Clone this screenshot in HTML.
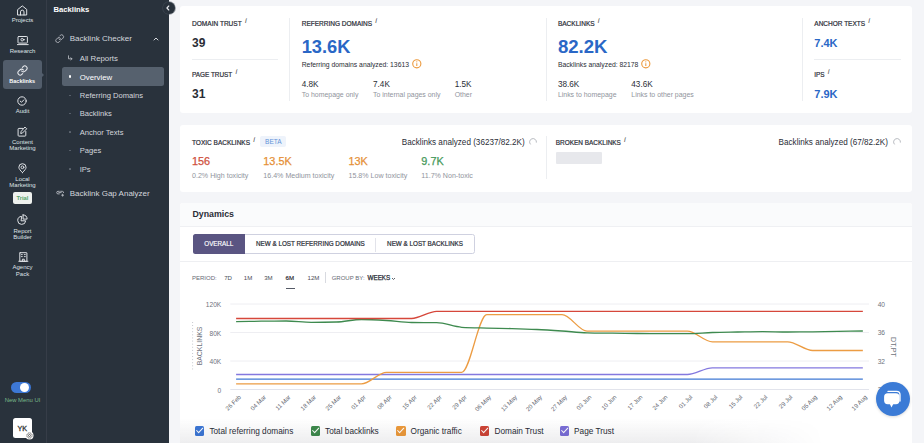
<!DOCTYPE html>
<html><head><meta charset="utf-8"><style>
html,body{margin:0;padding:0;width:924px;height:443px;overflow:hidden;background:#f4f5f8;font-family:"Liberation Sans", sans-serif;}
.t{position:absolute;white-space:nowrap;line-height:1;}
.s{line-height:0;font-style:italic;font-size:7.8px;color:#555;margin-left:3.2px;position:relative;top:-2.6px;-webkit-text-stroke:0;font-weight:400}
</style></head><body>
<div style="position:absolute;left:0px;top:0px;width:169px;height:443px;background:#29323c"></div><div style="position:absolute;left:46px;top:0px;width:1px;height:443px;background:#363d48"></div><div style="position:absolute;left:3px;top:60px;width:38.5px;height:29px;background:#525d6b;border-radius:3px"></div><div style="position:absolute;left:41px;top:71.5px;width:0;height:0;border-top:3px solid transparent;border-bottom:3px solid transparent;border-left:3px solid #525d6b"></div><svg style="position:absolute;left:17px;top:5px" width="11" height="12" viewBox="0 0 11 12" fill="none" stroke="#dfe2e6" stroke-width="1" stroke-linecap="round" stroke-linejoin="round"><path d="M0.9 4.4 L5.3 0.9 L9.7 4.4 V10 H0.9 Z"/><path d="M3.5 10 V6.9 a1.75 1.75 0 0 1 3.5 0 V10"/></svg><div class="t" style="left:22.50px;transform:translateX(-50%);top:17.00px;font-size:6px;color:#dfe1e5;font-weight:400;">Projects</div><svg style="position:absolute;left:16.5px;top:36px" width="12" height="10" viewBox="0 0 12 10" fill="none" stroke="#dfe2e6" stroke-width="1" stroke-linecap="round" stroke-linejoin="round"><rect x="1" y="0.5" width="9.4" height="6.6" rx="0.6"/><path d="M0.4 8.6 H11.2"/><circle cx="5.2" cy="3.7" r="1.3"/><path d="M6.5 3.7 H7.6"/></svg><div class="t" style="left:22.50px;transform:translateX(-50%);top:47.90px;font-size:6px;color:#dfe1e5;font-weight:400;">Research</div><svg style="position:absolute;left:16.5px;top:65.3px" width="11" height="11" viewBox="0 0 24 24" fill="none" stroke="#e6e8ec" stroke-width="2.3" stroke-linecap="round" stroke-linejoin="round"><path d="M10 13a5 5 0 0 0 7.54.54l3-3a5 5 0 0 0-7.07-7.07l-1.72 1.71"/><path d="M14 11a5 5 0 0 0-7.54-.54l-3 3a5 5 0 0 0 7.07 7.07l1.71-1.71"/></svg><div class="t" style="left:22.20px;transform:translateX(-50%);top:78.83px;font-size:5.5px;color:#ffffff;font-weight:700;">Backlinks</div><svg style="position:absolute;left:16.8px;top:96.2px" width="11" height="11" viewBox="0 0 11 11" fill="none" stroke="#dfe2e6" stroke-width="1" stroke-linecap="round" stroke-linejoin="round"><circle cx="5" cy="5" r="4.2"/><path d="M3.2 5.1 L4.5 6.3 L6.9 3.8"/></svg><div class="t" style="left:22.50px;transform:translateX(-50%);top:107.90px;font-size:6px;color:#dfe1e5;font-weight:400;">Audit</div><svg style="position:absolute;left:16.7px;top:125.5px" width="11" height="11" viewBox="0 0 11 11" fill="none" stroke="#dfe2e6" stroke-width="1" stroke-linecap="round" stroke-linejoin="round"><path d="M8.8 5.5 V9.3 a0.8 0.8 0 0 1 -0.8 0.8 H1.9 a0.8 0.8 0 0 1 -0.8 -0.8 V3.2 a0.8 0.8 0 0 1 0.8 -0.8 H5.6"/><path d="M8.2 1.3 L9.7 2.8 L5.4 7.1 L3.7 7.5 L4.1 5.8 Z"/></svg><div class="t" style="left:22.50px;transform:translateX(-50%);top:138.90px;font-size:6px;color:#dfe1e5;font-weight:400;">Content</div><div class="t" style="left:22.50px;transform:translateX(-50%);top:145.10px;font-size:6px;color:#dfe1e5;font-weight:400;">Marketing</div><svg style="position:absolute;left:17.8px;top:163px" width="10" height="12" viewBox="0 0 10 12" fill="none" stroke="#dfe2e6" stroke-width="1" stroke-linecap="round" stroke-linejoin="round"><path d="M4.45 9.6 C2.2 7.3 0.85 5.7 0.85 4.3 a3.6 3.6 0 0 1 7.2 0 C8.05 5.7 6.7 7.3 4.45 9.6 Z"/><circle cx="4.45" cy="4.3" r="1.4"/></svg><div class="t" style="left:22.50px;transform:translateX(-50%);top:175.60px;font-size:6px;color:#dfe1e5;font-weight:400;">Local</div><div class="t" style="left:22.50px;transform:translateX(-50%);top:181.90px;font-size:6px;color:#dfe1e5;font-weight:400;">Marketing</div><div style="position:absolute;left:13px;top:192.3px;width:19px;height:11.7px;background:#eef1ee;border-radius:2px"></div><div class="t" style="left:22.50px;transform:translateX(-50%);top:195.67px;font-size:5.8px;color:#58a56a;font-weight:700;">Trial</div><svg style="position:absolute;left:16.8px;top:214.3px" width="11" height="11" viewBox="0 0 11 11" fill="none" stroke="#dfe2e6" stroke-width="1" stroke-linecap="round" stroke-linejoin="round"><path d="M4.4 2.4 a4 4 0 1 0 4.3 4.4 H4.4 Z"/><path d="M6.1 0.9 V5.1 H10.1 A4.2 4.2 0 0 0 6.1 0.9 Z"/></svg><div class="t" style="left:22.50px;transform:translateX(-50%);top:227.70px;font-size:6px;color:#dfe1e5;font-weight:400;">Report</div><div class="t" style="left:22.50px;transform:translateX(-50%);top:234.20px;font-size:6px;color:#dfe1e5;font-weight:400;">Builder</div><svg style="position:absolute;left:17.5px;top:252.2px" width="11" height="11" viewBox="0 0 11 11" fill="none" stroke="#dfe2e6" stroke-width="1" stroke-linecap="round" stroke-linejoin="round"><rect x="1.8" y="0.7" width="7.1" height="8.6" rx="0.3"/><path d="M0.8 9.3 H9.9"/><path d="M3.3 2.6 H4.3 M6.3 2.6 H7.3 M3.3 4.6 H4.3 M6.3 4.6 H7.3" stroke-width="0.9"/><path d="M4.4 9.3 V7.2 H6.3 V9.3"/></svg><div class="t" style="left:22.50px;transform:translateX(-50%);top:264.20px;font-size:6px;color:#dfe1e5;font-weight:400;">Agency</div><div class="t" style="left:22.50px;transform:translateX(-50%);top:271.20px;font-size:6px;color:#dfe1e5;font-weight:400;">Pack</div><div style="position:absolute;left:10.7px;top:382px;width:20px;height:11.4px;background:#3d78d6;border-radius:6px"></div><div style="position:absolute;left:20.2px;top:383.2px;width:9px;height:9px;background:#fff;border-radius:50%"></div><div class="t" style="left:22.50px;transform:translateX(-50%);top:398.19px;font-size:5.9px;color:#78b88a;font-weight:400;">New Menu UI</div><div style="position:absolute;left:12.8px;top:418.2px;width:19.3px;height:19.8px;background:#fff;border-radius:2.5px"></div><div class="t" style="left:22.30px;transform:translateX(-50%);top:425.48px;font-size:7.2px;color:#333;font-weight:400;-webkit-text-stroke:0.3px #333">YK</div><svg style="position:absolute;left:24.5px;top:431px" width="9" height="9" viewBox="0 0 9 9"><circle cx="4.5" cy="4.5" r="4" fill="#fff"/><circle cx="4.5" cy="4.5" r="2.6" fill="none" stroke="#333" stroke-width="0.9" stroke-dasharray="1.2 0.8"/><circle cx="4.5" cy="4.5" r="1" fill="none" stroke="#333" stroke-width="0.7"/></svg><div class="t" style="left:53.40px;top:5.86px;font-size:7.7px;color:#ffffff;font-weight:700;">Backlinks</div><svg style="position:absolute;left:55.3px;top:33.6px" width="9.4" height="9.4" viewBox="0 0 24 24" fill="none" stroke="#b4b8bf" stroke-width="2.3" stroke-linecap="round" stroke-linejoin="round"><path d="M10 13a5 5 0 0 0 7.54.54l3-3a5 5 0 0 0-7.07-7.07l-1.72 1.71"/><path d="M14 11a5 5 0 0 0-7.54-.54l-3 3a5 5 0 0 0 7.07 7.07l1.71-1.71"/></svg><div class="t" style="left:69.70px;top:34.86px;font-size:8.05px;color:#d4d7dc;font-weight:400;">Backlink Checker</div><svg style="position:absolute;left:152.5px;top:37px" width="6" height="4" viewBox="0 0 6 4" fill="none" stroke="#d4d7dc" stroke-width="1" stroke-linecap="round" stroke-linejoin="round"><path d="M1 3 L3 1 L5 3"/></svg><svg style="position:absolute;left:67px;top:54.6px" width="6" height="6" viewBox="0 0 6 6" fill="none" stroke="#c0c4ca" stroke-width="0.8" stroke-linecap="round"><path d="M1.5 0.8 V3.8 H5"/><path d="M3.8 2.8 L5 3.8 L3.8 4.8"/></svg><div class="t" style="left:79.70px;top:54.97px;font-size:7.8px;color:#d4d7dc;font-weight:400;">All Reports</div><div style="position:absolute;left:62.2px;top:67px;width:102px;height:18.8px;background:#56616e;border-radius:2.5px"></div><div style="position:absolute;left:68.8px;top:75.4px;width:2.4px;height:2.4px;background:#fff;border-radius:50%"></div><div class="t" style="left:79.70px;top:73.57px;font-size:7.8px;color:#ffffff;font-weight:400;">Overview</div><div style="position:absolute;left:69.4px;top:95.0px;width:1.2px;height:1.2px;background:#5d6570;border-radius:50%"></div><div class="t" style="left:79.70px;top:92.14px;font-size:7.6px;color:#d4d7dc;font-weight:400;">Referring Domains</div><div style="position:absolute;left:69.4px;top:113.30000000000001px;width:1.2px;height:1.2px;background:#5d6570;border-radius:50%"></div><div class="t" style="left:79.70px;top:110.44px;font-size:7.6px;color:#d4d7dc;font-weight:400;">Backlinks</div><div style="position:absolute;left:69.4px;top:131.4px;width:1.2px;height:1.2px;background:#5d6570;border-radius:50%"></div><div class="t" style="left:79.70px;top:128.54px;font-size:7.6px;color:#d4d7dc;font-weight:400;">Anchor Texts</div><div style="position:absolute;left:69.4px;top:150.0px;width:1.2px;height:1.2px;background:#5d6570;border-radius:50%"></div><div class="t" style="left:79.70px;top:147.14px;font-size:7.6px;color:#d4d7dc;font-weight:400;">Pages</div><div style="position:absolute;left:69.4px;top:168.4px;width:1.2px;height:1.2px;background:#5d6570;border-radius:50%"></div><div class="t" style="left:79.70px;top:165.54px;font-size:7.6px;color:#d4d7dc;font-weight:400;">IPs</div><svg style="position:absolute;left:55.5px;top:190px" width="9" height="7" viewBox="0 0 9 7" fill="none" stroke="#b4b8bf" stroke-width="0.9" stroke-linecap="round"><path d="M3.3 1.3 H2 a1.3 1.3 0 0 0 0 2.6 H3.3"/><path d="M4.6 1.3 H6.3 a1.3 1.3 0 0 1 1.3 1.3"/><path d="M2.8 2.6 H5.2"/><path d="M6.6 4.2 V6.2 M5.6 5.2 H7.6"/></svg><div class="t" style="left:69.70px;top:190.00px;font-size:8.0px;color:#d4d7dc;font-weight:400;">Backlink Gap Analyzer</div><div style="position:absolute;left:162.6px;top:1.7px;width:12.6px;height:12.6px;border-radius:50%;background:#29323c;box-shadow:0 0 0 0.8px rgba(70,78,90,0.6)"></div><svg style="position:absolute;left:165.1px;top:4.5px" width="6" height="6" viewBox="0 0 6 6" fill="none" stroke="#e8eaee" stroke-width="1.1" stroke-linecap="round" stroke-linejoin="round"><path d="M3.8 1 L1.9 3 L3.8 5"/></svg>
<div style="position:absolute;left:180px;top:5.5px;width:732px;height:107px;background:#fff;border-radius:3px"></div><div class="t" style="left:192.00px;top:21.03px;font-size:6.55px;color:#2a2d36;font-weight:400;-webkit-text-stroke:0.2px #2a2d36">DOMAIN TRUST<i class="s">i</i></div><div class="t" style="left:192.00px;top:37.00px;font-size:12px;color:#2a2d36;font-weight:700;">39</div><div style="position:absolute;left:192px;top:59.3px;width:86px;height:1px;background:#eceef1"></div><div class="t" style="left:192.00px;top:72.06px;font-size:6.4px;color:#2a2d36;font-weight:400;-webkit-text-stroke:0.2px #2a2d36">PAGE TRUST<i class="s">i</i></div><div class="t" style="left:192.00px;top:88.00px;font-size:12px;color:#2a2d36;font-weight:700;">31</div><div style="position:absolute;left:289px;top:17.5px;width:1px;height:83px;background:#eceef1"></div><div class="t" style="left:301.70px;top:20.88px;font-size:6.5px;color:#2a2d36;font-weight:400;-webkit-text-stroke:0.2px #2a2d36">REFERRING DOMAINS<i class="s">i</i></div><div class="t" style="left:301.70px;top:37.84px;font-size:18.3px;color:#2a67c6;font-weight:700;">13.6K</div><div class="t" style="left:301.70px;top:61.82px;font-size:6.8px;color:#2a2d36;font-weight:400;">Referring domains analyzed: 13613</div><svg style="position:absolute;left:412.3px;top:59.1px" width="9.6" height="9.6" viewBox="0 0 10 10"><circle cx="5" cy="5" r="4.25" fill="none" stroke="#ec9a3e" stroke-width="1.15"/><path d="M5 4.4 V7.2" stroke="#ec9a3e" stroke-width="1.1"/><circle cx="5" cy="2.95" r="0.62" fill="#ec9a3e"/></svg><div class="t" style="left:301.70px;top:80.83px;font-size:8.2px;color:#2a2d36;font-weight:400;">4.8K</div><div class="t" style="left:301.70px;top:91.69px;font-size:6.95px;color:#90949d;font-weight:400;">To homepage only</div><div class="t" style="left:373.00px;top:80.83px;font-size:8.2px;color:#2a2d36;font-weight:400;">7.4K</div><div class="t" style="left:373.00px;top:91.69px;font-size:6.95px;color:#90949d;font-weight:400;">To internal pages only</div><div class="t" style="left:454.70px;top:80.83px;font-size:8.2px;color:#2a2d36;font-weight:400;">1.5K</div><div class="t" style="left:454.70px;top:91.69px;font-size:6.95px;color:#90949d;font-weight:400;">Other</div><div style="position:absolute;left:546px;top:17.5px;width:1px;height:83px;background:#eceef1"></div><div class="t" style="left:557.90px;top:20.83px;font-size:6.55px;color:#2a2d36;font-weight:400;-webkit-text-stroke:0.2px #2a2d36">BACKLINKS<i class="s">i</i></div><div class="t" style="left:557.90px;top:37.59px;font-size:18.6px;color:#2a67c6;font-weight:700;">82.2K</div><div class="t" style="left:557.90px;top:61.82px;font-size:6.8px;color:#2a2d36;font-weight:400;">Backlinks analyzed: 82178</div><svg style="position:absolute;left:641.1px;top:59.1px" width="9.6" height="9.6" viewBox="0 0 10 10"><circle cx="5" cy="5" r="4.25" fill="none" stroke="#ec9a3e" stroke-width="1.15"/><path d="M5 4.4 V7.2" stroke="#ec9a3e" stroke-width="1.1"/><circle cx="5" cy="2.95" r="0.62" fill="#ec9a3e"/></svg><div class="t" style="left:557.90px;top:80.83px;font-size:8.2px;color:#2a2d36;font-weight:400;">38.6K</div><div class="t" style="left:557.90px;top:91.69px;font-size:6.95px;color:#90949d;font-weight:400;">Links to homepage</div><div class="t" style="left:631.30px;top:80.83px;font-size:8.2px;color:#2a2d36;font-weight:400;">43.6K</div><div class="t" style="left:631.30px;top:91.69px;font-size:6.95px;color:#90949d;font-weight:400;">Links to other pages</div><div style="position:absolute;left:802px;top:17.5px;width:1px;height:83px;background:#eceef1"></div><div class="t" style="left:814.30px;top:21.08px;font-size:6.5px;color:#2a2d36;font-weight:400;-webkit-text-stroke:0.2px #2a2d36">ANCHOR TEXTS<i class="s">i</i></div><div class="t" style="left:814.30px;top:37.85px;font-size:11px;color:#2a67c6;font-weight:700;">7.4K</div><div style="position:absolute;left:814.3px;top:59.3px;width:86.6px;height:1px;background:#eceef1"></div><div class="t" style="left:814.30px;top:72.06px;font-size:6.4px;color:#2a2d36;font-weight:400;-webkit-text-stroke:0.2px #2a2d36">IPS<i class="s">i</i></div><div class="t" style="left:814.30px;top:88.85px;font-size:11px;color:#2a67c6;font-weight:700;">7.9K</div><div style="position:absolute;left:180px;top:124.5px;width:732px;height:67.1px;background:#fff;border-radius:3px"></div><div class="t" style="left:192.00px;top:139.67px;font-size:6.5px;color:#2a2d36;font-weight:400;-webkit-text-stroke:0.2px #2a2d36">TOXIC BACKLINKS<i class="s">i</i></div><div style="position:absolute;left:260.2px;top:136.3px;width:26.3px;height:11.2px;background:#eef3fb;border-radius:2px"></div><div class="t" style="left:273.35px;transform:translateX(-50%);top:139.07px;font-size:6.5px;color:#5f92d8;font-weight:400;">BETA</div><div class="t" style="left:401.80px;top:138.59px;font-size:8.13px;color:#2a2d36;font-weight:400;">Backlinks analyzed (36237/82.2K)</div><svg style="position:absolute;left:528.6px;top:137.5px" width="8" height="8" viewBox="0 0 8 8"><path d="M1.6 6.4 A3.4 3.4 0 1 1 7.35 4.6" fill="none" stroke="#b0b3ba" stroke-width="0.9"/></svg><div class="t" style="left:192.00px;top:155.74px;font-size:10.9px;color:#cf4f3c;font-weight:400;-webkit-text-stroke:0.25px #cf4f3c">156</div><div class="t" style="left:192.00px;top:173.27px;font-size:7.1px;color:#90949d;font-weight:400;">0.2% High toxicity</div><div class="t" style="left:263.30px;top:155.74px;font-size:10.9px;color:#e58f36;font-weight:400;-webkit-text-stroke:0.25px #e58f36">13.5K</div><div class="t" style="left:263.30px;top:173.27px;font-size:7.1px;color:#90949d;font-weight:400;">16.4% Medium toxicity</div><div class="t" style="left:348.50px;top:155.74px;font-size:10.9px;color:#e58f36;font-weight:400;-webkit-text-stroke:0.25px #e58f36">13K</div><div class="t" style="left:348.50px;top:173.27px;font-size:7.1px;color:#90949d;font-weight:400;">15.8% Low toxicity</div><div class="t" style="left:421.30px;top:155.74px;font-size:10.9px;color:#46995a;font-weight:400;-webkit-text-stroke:0.25px #46995a">9.7K</div><div class="t" style="left:421.30px;top:173.27px;font-size:7.1px;color:#90949d;font-weight:400;">11.7% Non-toxic</div><div style="position:absolute;left:546px;top:136.3px;width:1px;height:43.2px;background:#eceef1"></div><div class="t" style="left:555.80px;top:139.72px;font-size:6.45px;color:#2a2d36;font-weight:400;-webkit-text-stroke:0.2px #2a2d36">BROKEN BACKLINKS<i class="s">i</i></div><div style="position:absolute;left:555.8px;top:152.4px;width:46.5px;height:11.2px;background:#e7e8ec;border-radius:1px"></div><div class="t" style="right:36.10px;top:138.59px;font-size:8.13px;color:#2a2d36;font-weight:400;">Backlinks analyzed (67/82.2K)</div><svg style="position:absolute;left:893.2px;top:137.5px" width="8" height="8" viewBox="0 0 8 8"><path d="M1.6 6.4 A3.4 3.4 0 1 1 7.35 4.6" fill="none" stroke="#b0b3ba" stroke-width="0.9"/></svg><div style="position:absolute;left:180px;top:203px;width:732px;height:260px;background:#fff;border-radius:3px;overflow:hidden"></div><div style="position:absolute;left:180px;top:203px;width:732px;height:24px;background:#fafbfc;border-radius:3px 3px 0 0;border-bottom:1px solid #eff0f3;box-sizing:border-box"></div><div class="t" style="left:192.40px;top:210.42px;font-size:8.8px;color:#2a2d36;font-weight:700;">Dynamics</div><div style="position:absolute;left:192.6px;top:234.4px;width:282.2px;height:20px;border:1px solid #cfd1e0;border-radius:2.5px;box-sizing:border-box;background:#fff"></div><div style="position:absolute;left:192.6px;top:234.4px;width:52.4px;height:20px;background:#5a5582;border-radius:2.5px 0 0 2.5px"></div><div class="t" style="left:218.80px;transform:translateX(-50%);top:241.45px;font-size:6.3px;color:#ffffff;font-weight:400;-webkit-text-stroke:0.15px #fff">OVERALL</div><div class="t" style="left:310.40px;transform:translateX(-50%);top:241.45px;font-size:6.3px;color:#2a2d36;font-weight:400;-webkit-text-stroke:0.2px #2a2d36">NEW &amp; LOST REFERRING DOMAINS</div><div style="position:absolute;left:375.4px;top:237.5px;width:1px;height:14px;background:#e2e3ea"></div><div class="t" style="left:425.00px;transform:translateX(-50%);top:241.45px;font-size:6.3px;color:#2a2d36;font-weight:400;-webkit-text-stroke:0.2px #2a2d36">NEW &amp; LOST BACKLINKS</div><div style="position:absolute;left:180px;top:260.8px;width:732px;height:1px;background:#eeeff2"></div><div class="t" style="left:192.00px;top:275.37px;font-size:6.03px;color:#656974;font-weight:400;">PERIOD:</div><div class="t" style="left:224.20px;top:275.31px;font-size:6.1px;color:#4a4e58;font-weight:400;">7D</div><div class="t" style="left:243.80px;top:275.31px;font-size:6.1px;color:#4a4e58;font-weight:400;">1M</div><div class="t" style="left:264.20px;top:275.31px;font-size:6.1px;color:#4a4e58;font-weight:400;">3M</div><div class="t" style="left:285.60px;top:275.31px;font-size:6.1px;color:#1f2229;font-weight:400;-webkit-text-stroke:0.15px #1f2229">6M</div><div class="t" style="left:307.50px;top:275.31px;font-size:6.1px;color:#4a4e58;font-weight:400;">12M</div><div style="position:absolute;left:285.6px;top:287.5px;width:9.6px;height:1.4px;background:#555a66"></div><div style="position:absolute;left:325.4px;top:272.4px;width:0.8px;height:10.6px;background:#d8dae0"></div><div class="t" style="left:331.70px;top:275.40px;font-size:6.0px;color:#656974;font-weight:400;">GROUP BY:</div><div class="t" style="left:367.50px;top:275.14px;font-size:6.3px;color:#2a2d36;font-weight:400;-webkit-text-stroke:0.25px #2a2d36">WEEKS</div><svg style="position:absolute;left:390.5px;top:276.5px" width="5" height="4" viewBox="0 0 5 4" fill="none" stroke="#3b3f48" stroke-width="0.8"><path d="M1 1 L2.5 2.5 L4 1"/></svg>
<svg style="position:absolute;left:0;top:0" width="924" height="443" viewBox="0 0 924 443"><line x1="230.3" y1="304.0" x2="869" y2="304.0" stroke="#eeeef2" stroke-width="1"/><line x1="230.3" y1="332.5" x2="869" y2="332.5" stroke="#eeeef2" stroke-width="1"/><line x1="230.3" y1="361.0" x2="869" y2="361.0" stroke="#eeeef2" stroke-width="1"/><line x1="230.3" y1="389.5" x2="869" y2="389.5" stroke="#e2e4ec" stroke-width="1"/><path d="M236.10,379.20 C244.46,379.20 252.81,379.20 261.17,379.20 C269.53,379.20 277.88,379.20 286.24,379.20 C294.60,379.20 302.95,379.20 311.31,379.20 C319.67,379.20 328.02,379.20 336.38,379.20 C344.74,379.20 353.09,379.20 361.45,379.20 C369.81,379.20 378.16,379.20 386.52,379.20 C394.88,379.20 403.23,379.20 411.59,379.20 C419.95,379.20 428.30,379.20 436.66,379.20 C445.02,379.20 453.37,379.20 461.73,379.20 C470.09,379.20 478.44,379.20 486.80,379.20 C495.16,379.20 503.51,379.20 511.87,379.20 C520.23,379.20 528.58,379.20 536.94,379.20 C545.30,379.20 553.65,379.20 562.01,379.20 C570.37,379.20 578.72,379.20 587.08,379.20 C595.44,379.20 603.79,379.20 612.15,379.20 C620.51,379.20 628.86,379.20 637.22,379.20 C645.58,379.20 653.93,379.20 662.29,379.20 C670.65,379.20 679.00,379.20 687.36,379.20 C695.72,379.20 704.07,379.20 712.43,379.20 C720.79,379.20 729.14,379.20 737.50,379.20 C745.86,379.20 754.21,379.20 762.57,379.20 C770.93,379.20 779.28,379.20 787.64,379.20 C796.00,379.20 804.35,379.20 812.71,379.20 C821.07,379.20 829.42,379.20 837.78,379.20 C846.14,379.20 854.49,379.20 862.85,379.20" fill="none" stroke="#3f79d4" stroke-width="1.3"/><path d="M236.10,374.50 C244.46,374.50 252.81,374.50 261.17,374.50 C269.53,374.50 277.88,374.50 286.24,374.50 C294.60,374.50 302.95,374.50 311.31,374.50 C319.67,374.50 328.02,374.50 336.38,374.50 C344.74,374.50 353.09,374.50 361.45,374.50 C369.81,374.50 378.16,374.50 386.52,374.50 C394.88,374.50 403.23,374.50 411.59,374.50 C419.95,374.50 428.30,374.50 436.66,374.50 C445.02,374.50 453.37,374.50 461.73,374.50 C470.09,374.50 478.44,374.50 486.80,374.50 C495.16,374.50 503.51,374.50 511.87,374.50 C520.23,374.50 528.58,374.50 536.94,374.50 C545.30,374.50 553.65,374.50 562.01,374.50 C570.37,374.50 578.72,374.50 587.08,374.50 C595.44,374.50 603.79,374.50 612.15,374.50 C620.51,374.50 628.86,374.50 637.22,374.50 C645.58,374.50 653.93,374.50 662.29,374.50 C670.65,374.50 679.00,374.50 687.36,374.50 C695.72,374.50 704.07,367.80 712.43,367.80 C720.79,367.80 729.14,367.80 737.50,367.80 C745.86,367.80 754.21,367.80 762.57,367.80 C770.93,367.80 779.28,367.80 787.64,367.80 C796.00,367.80 804.35,367.80 812.71,367.80 C821.07,367.80 829.42,367.80 837.78,367.80 C846.14,367.80 854.49,367.80 862.85,367.80" fill="none" stroke="#8479df" stroke-width="1.3"/><path d="M236.10,383.90 C244.46,383.90 252.81,383.90 261.17,383.90 C269.53,383.90 277.88,383.90 286.24,383.90 C294.60,383.90 302.95,383.90 311.31,383.90 C319.67,383.90 328.02,383.90 336.38,383.90 C344.74,383.90 353.09,383.90 361.45,383.90 C369.81,383.90 378.16,372.30 386.52,372.30 C394.88,372.30 403.23,372.30 411.59,372.30 C419.95,372.30 428.30,372.30 436.66,372.30 C445.02,372.30 453.37,372.30 461.73,372.30 C470.09,372.30 478.44,314.60 486.80,314.60 C495.16,314.60 503.51,314.60 511.87,314.60 C520.23,314.60 528.58,314.60 536.94,314.60 C545.30,314.60 553.65,314.60 562.01,314.60 C570.37,314.60 578.72,331.10 587.08,331.10 C595.44,331.10 603.79,331.10 612.15,331.10 C620.51,331.10 628.86,331.10 637.22,331.10 C645.58,331.10 653.93,331.10 662.29,331.10 C670.65,331.10 679.00,331.10 687.36,331.10 C695.72,331.10 704.07,341.80 712.43,341.80 C720.79,341.80 729.14,341.80 737.50,341.80 C745.86,341.80 754.21,341.80 762.57,341.80 C770.93,341.80 779.28,341.80 787.64,341.80 C796.00,341.80 804.35,350.50 812.71,350.50 C821.07,350.50 829.42,350.50 837.78,350.50 C846.14,350.50 854.49,350.50 862.85,350.50" fill="none" stroke="#ec9c43" stroke-width="1.3"/><path d="M236.10,321.70 C244.46,321.51 252.81,321.32 261.17,321.20 C269.53,321.08 277.88,321.00 286.24,321.00 C294.60,321.00 302.95,322.30 311.31,322.30 C319.67,322.30 328.02,322.20 336.38,322.00 C344.74,321.80 353.09,319.50 361.45,319.50 C369.81,319.50 378.16,320.00 386.52,320.50 C394.88,321.00 403.23,322.43 411.59,322.50 C419.95,322.57 428.30,322.53 436.66,322.60 C445.02,322.67 453.37,326.77 461.73,327.30 C470.09,327.83 478.44,327.88 486.80,328.10 C495.16,328.32 503.51,328.37 511.87,328.60 C520.23,328.83 528.58,329.10 536.94,329.50 C545.30,329.90 553.65,330.45 562.01,331.00 C570.37,331.55 578.72,332.53 587.08,332.80 C595.44,333.07 603.79,333.08 612.15,333.20 C620.51,333.32 628.86,333.42 637.22,333.50 C645.58,333.58 653.93,333.70 662.29,333.70 C670.65,333.70 679.00,333.70 687.36,333.70 C695.72,333.70 704.07,332.78 712.43,332.50 C720.79,332.22 729.14,332.15 737.50,332.00 C745.86,331.85 754.21,331.60 762.57,331.60 C770.93,331.60 779.28,332.00 787.64,332.00 C796.00,332.00 804.35,331.90 812.71,331.80 C821.07,331.70 829.42,331.53 837.78,331.40 C846.14,331.27 854.49,331.13 862.85,331.00" fill="none" stroke="#3e8a4f" stroke-width="1.3"/><path d="M236.10,318.50 C244.46,318.50 252.81,318.50 261.17,318.50 C269.53,318.50 277.88,318.50 286.24,318.50 C294.60,318.50 302.95,318.50 311.31,318.50 C319.67,318.50 328.02,318.50 336.38,318.50 C344.74,318.50 353.09,318.50 361.45,318.50 C369.81,318.50 378.16,318.50 386.52,318.50 C394.88,318.50 403.23,318.50 411.59,318.50 C419.95,318.50 428.30,311.40 436.66,311.40 C445.02,311.40 453.37,311.40 461.73,311.40 C470.09,311.40 478.44,311.40 486.80,311.40 C495.16,311.40 503.51,311.40 511.87,311.40 C520.23,311.40 528.58,311.40 536.94,311.40 C545.30,311.40 553.65,311.40 562.01,311.40 C570.37,311.40 578.72,311.40 587.08,311.40 C595.44,311.40 603.79,311.40 612.15,311.40 C620.51,311.40 628.86,311.40 637.22,311.40 C645.58,311.40 653.93,311.40 662.29,311.40 C670.65,311.40 679.00,311.40 687.36,311.40 C695.72,311.40 704.07,311.40 712.43,311.40 C720.79,311.40 729.14,311.40 737.50,311.40 C745.86,311.40 754.21,311.40 762.57,311.40 C770.93,311.40 779.28,311.40 787.64,311.40 C796.00,311.40 804.35,311.40 812.71,311.40 C821.07,311.40 829.42,311.40 837.78,311.40 C846.14,311.40 854.49,311.40 862.85,311.40" fill="none" stroke="#d6473b" stroke-width="1.3"/></svg><div class="t" style="right:702.80px;top:302.19px;font-size:6.6px;color:#6e727c;font-weight:400;">120K</div><div class="t" style="right:702.80px;top:330.69px;font-size:6.6px;color:#6e727c;font-weight:400;">80K</div><div class="t" style="right:702.80px;top:359.19px;font-size:6.6px;color:#6e727c;font-weight:400;">40K</div><div class="t" style="right:702.80px;top:387.69px;font-size:6.6px;color:#6e727c;font-weight:400;">0</div><div class="t" style="left:877.70px;top:301.59px;font-size:6.6px;color:#6e727c;font-weight:400;">40</div><div class="t" style="left:877.70px;top:330.09px;font-size:6.6px;color:#6e727c;font-weight:400;">36</div><div class="t" style="left:877.70px;top:358.59px;font-size:6.6px;color:#6e727c;font-weight:400;">32</div><div class="t" style="left:877.70px;top:387.09px;font-size:6.6px;color:#6e727c;font-weight:400;">28</div><div class="t" style="left:199.8px;top:346.4px;font-size:6.9px;color:#6e727c;transform:translate(-50%,-50%) rotate(-90deg);">BACKLINKS</div><svg style="position:absolute;left:191px;top:321px" width="4" height="51" viewBox="0 0 4 51"><line x1="1.6" y1="1" x2="1.6" y2="50" stroke="#b9bcc3" stroke-width="0.9" stroke-dasharray="0.9 2.2"/></svg><div class="t" style="left:893px;top:347px;font-size:7.2px;color:#6e727c;transform:translate(-50%,-50%) rotate(90deg);">DT,PT</div><div class="t" style="right:686.30px;top:393.60px;font-size:6.1px;color:#62666f;transform-origin:100% 0;transform:rotate(-45deg);">26 Feb</div><div class="t" style="right:661.23px;top:393.60px;font-size:6.1px;color:#62666f;transform-origin:100% 0;transform:rotate(-45deg);">04 Mar</div><div class="t" style="right:636.16px;top:393.60px;font-size:6.1px;color:#62666f;transform-origin:100% 0;transform:rotate(-45deg);">11 Mar</div><div class="t" style="right:611.09px;top:393.60px;font-size:6.1px;color:#62666f;transform-origin:100% 0;transform:rotate(-45deg);">18 Mar</div><div class="t" style="right:586.02px;top:393.60px;font-size:6.1px;color:#62666f;transform-origin:100% 0;transform:rotate(-45deg);">25 Mar</div><div class="t" style="right:560.95px;top:393.60px;font-size:6.1px;color:#62666f;transform-origin:100% 0;transform:rotate(-45deg);">01 Apr</div><div class="t" style="right:535.88px;top:393.60px;font-size:6.1px;color:#62666f;transform-origin:100% 0;transform:rotate(-45deg);">08 Apr</div><div class="t" style="right:510.81px;top:393.60px;font-size:6.1px;color:#62666f;transform-origin:100% 0;transform:rotate(-45deg);">15 Apr</div><div class="t" style="right:485.74px;top:393.60px;font-size:6.1px;color:#62666f;transform-origin:100% 0;transform:rotate(-45deg);">22 Apr</div><div class="t" style="right:460.67px;top:393.60px;font-size:6.1px;color:#62666f;transform-origin:100% 0;transform:rotate(-45deg);">29 Apr</div><div class="t" style="right:435.60px;top:393.60px;font-size:6.1px;color:#62666f;transform-origin:100% 0;transform:rotate(-45deg);">06 May</div><div class="t" style="right:410.53px;top:393.60px;font-size:6.1px;color:#62666f;transform-origin:100% 0;transform:rotate(-45deg);">13 May</div><div class="t" style="right:385.46px;top:393.60px;font-size:6.1px;color:#62666f;transform-origin:100% 0;transform:rotate(-45deg);">20 May</div><div class="t" style="right:360.39px;top:393.60px;font-size:6.1px;color:#62666f;transform-origin:100% 0;transform:rotate(-45deg);">27 May</div><div class="t" style="right:335.32px;top:393.60px;font-size:6.1px;color:#62666f;transform-origin:100% 0;transform:rotate(-45deg);">03 Jun</div><div class="t" style="right:310.25px;top:393.60px;font-size:6.1px;color:#62666f;transform-origin:100% 0;transform:rotate(-45deg);">10 Jun</div><div class="t" style="right:285.18px;top:393.60px;font-size:6.1px;color:#62666f;transform-origin:100% 0;transform:rotate(-45deg);">17 Jun</div><div class="t" style="right:260.11px;top:393.60px;font-size:6.1px;color:#62666f;transform-origin:100% 0;transform:rotate(-45deg);">24 Jun</div><div class="t" style="right:235.04px;top:393.60px;font-size:6.1px;color:#62666f;transform-origin:100% 0;transform:rotate(-45deg);">01 Jul</div><div class="t" style="right:209.97px;top:393.60px;font-size:6.1px;color:#62666f;transform-origin:100% 0;transform:rotate(-45deg);">08 Jul</div><div class="t" style="right:184.90px;top:393.60px;font-size:6.1px;color:#62666f;transform-origin:100% 0;transform:rotate(-45deg);">15 Jul</div><div class="t" style="right:159.83px;top:393.60px;font-size:6.1px;color:#62666f;transform-origin:100% 0;transform:rotate(-45deg);">22 Jul</div><div class="t" style="right:134.76px;top:393.60px;font-size:6.1px;color:#62666f;transform-origin:100% 0;transform:rotate(-45deg);">29 Jul</div><div class="t" style="right:109.69px;top:393.60px;font-size:6.1px;color:#62666f;transform-origin:100% 0;transform:rotate(-45deg);">05 Aug</div><div class="t" style="right:84.62px;top:393.60px;font-size:6.1px;color:#62666f;transform-origin:100% 0;transform:rotate(-45deg);">12 Aug</div><div class="t" style="right:59.55px;top:393.60px;font-size:6.1px;color:#62666f;transform-origin:100% 0;transform:rotate(-45deg);">19 Aug</div><div style="position:absolute;left:194.8px;top:426.2px;width:9.6px;height:9.6px;border-radius:1.5px;background:#3c77d6"></div><svg style="position:absolute;left:194.8px;top:426.2px" width="9.6" height="9.6" viewBox="0 0 10 10"><path d="M1.7 4.7 L3.8 6.9 L8.1 2.3" fill="none" stroke="#fff" stroke-width="1.1" stroke-linecap="round" stroke-linejoin="round"/></svg><div class="t" style="left:209.40px;top:427.99px;font-size:8.25px;color:#2a2d36;font-weight:400;">Total referring domains</div><div style="position:absolute;left:310.5px;top:426.2px;width:9.6px;height:9.6px;border-radius:1.5px;background:#3e8a4c"></div><svg style="position:absolute;left:310.5px;top:426.2px" width="9.6" height="9.6" viewBox="0 0 10 10"><path d="M1.7 4.7 L3.8 6.9 L8.1 2.3" fill="none" stroke="#fff" stroke-width="1.1" stroke-linecap="round" stroke-linejoin="round"/></svg><div class="t" style="left:325.10px;top:427.99px;font-size:8.25px;color:#2a2d36;font-weight:400;">Total backlinks</div><div style="position:absolute;left:396px;top:426.2px;width:9.6px;height:9.6px;border-radius:1.5px;background:#ee9a3a"></div><svg style="position:absolute;left:396px;top:426.2px" width="9.6" height="9.6" viewBox="0 0 10 10"><path d="M1.7 4.7 L3.8 6.9 L8.1 2.3" fill="none" stroke="#fff" stroke-width="1.1" stroke-linecap="round" stroke-linejoin="round"/></svg><div class="t" style="left:410.60px;top:427.99px;font-size:8.25px;color:#2a2d36;font-weight:400;">Organic traffic</div><div style="position:absolute;left:479.9px;top:426.2px;width:9.6px;height:9.6px;border-radius:1.5px;background:#cf4536"></div><svg style="position:absolute;left:479.9px;top:426.2px" width="9.6" height="9.6" viewBox="0 0 10 10"><path d="M1.7 4.7 L3.8 6.9 L8.1 2.3" fill="none" stroke="#fff" stroke-width="1.1" stroke-linecap="round" stroke-linejoin="round"/></svg><div class="t" style="left:494.50px;top:427.99px;font-size:8.25px;color:#2a2d36;font-weight:400;">Domain Trust</div><div style="position:absolute;left:559.5px;top:426.2px;width:9.6px;height:9.6px;border-radius:1.5px;background:#7b6fd8"></div><svg style="position:absolute;left:559.5px;top:426.2px" width="9.6" height="9.6" viewBox="0 0 10 10"><path d="M1.7 4.7 L3.8 6.9 L8.1 2.3" fill="none" stroke="#fff" stroke-width="1.1" stroke-linecap="round" stroke-linejoin="round"/></svg><div class="t" style="left:574.10px;top:427.99px;font-size:8.25px;color:#2a2d36;font-weight:400;">Page Trust</div><div style="position:absolute;left:180px;top:418px;width:732px;height:25px;background:linear-gradient(to bottom, rgba(0,0,0,0) 0%, rgba(20,20,40,0.075) 100%);-webkit-mask-image:linear-gradient(to right, #000 0%, #000 70%, transparent 88%);pointer-events:none"></div><div style="position:absolute;left:875.9px;top:382.3px;width:34px;height:34px;border-radius:50%;background:#3b7bd6;box-shadow:0 1px 3px rgba(0,0,0,0.15)"></div><svg style="position:absolute;left:872px;top:378px" width="42" height="42" viewBox="0 0 42 42"><path d="M16 13.4 H24.6 a3.4 3.4 0 0 1 3.4 3.4 V23" fill="none" stroke="#fff" stroke-width="1.3" stroke-linecap="round"/><rect x="12.1" y="15.3" width="15.4" height="10.9" rx="3.6" fill="#fff"/><path d="M17.6 25.5 L19.5 29.4 L21.5 25.5 Z" fill="#fff"/></svg>
</body></html>
